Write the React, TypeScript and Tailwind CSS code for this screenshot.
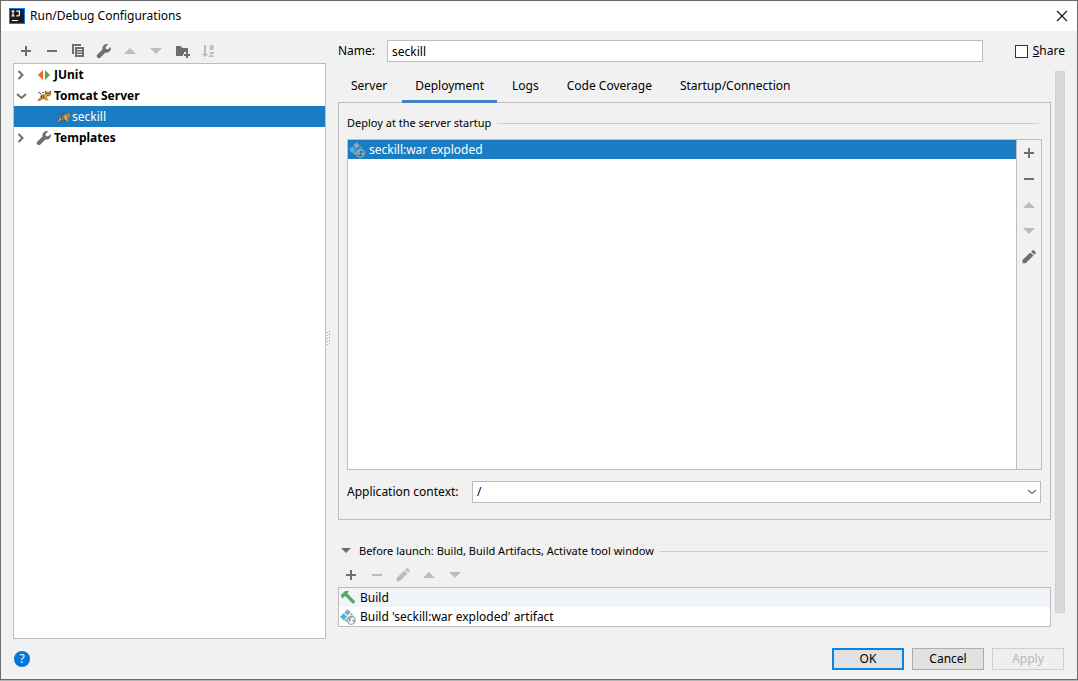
import { useState, type ReactNode } from "react";

const Icon = ({ children, size = 16 }: { children: ReactNode; size?: number }) => (
    <svg width={size} height={size} viewBox="0 0 16 16" className="shrink-0" aria-hidden="true">
        {children}
    </svg>
);

const PlusIcon = () => (
    <Icon>
        <path fill="currentColor" d="M7 3h2v4h4v2H9v4H7V9H3V7h4z" />
    </Icon>
);

const MinusIcon = () => (
    <Icon>
        <path fill="currentColor" d="M3 7h10v2H3z" />
    </Icon>
);

const CopyIcon = () => (
    <Icon>
        <path fill="currentColor" d="M2 1h9v2H4v8H2z" />
        <path fill="currentColor" fillRule="evenodd" d="M5 4h9v10H5zM7 6v1h5V6zM7 8.500v1h5v-1zM7 11v1h5v-1z" />
    </Icon>
);

const WrenchIcon = () => (
    <Icon>
        <path
            fill="currentColor"
            d="M14.600 3.900 12 6.500 9.900 6.100 9.500 4l2.600-2.600A4.300 4.300 0 0 0 6.500 6.500L1.400 11.600a2 2 0 0 0 3 3L9.500 9.500A4.300 4.300 0 0 0 14.600 3.900z"
        />
    </Icon>
);

const UpIcon = () => (
    <Icon>
        <path fill="currentColor" d="M2 11h12L8 5z" />
    </Icon>
);

const DownIcon = () => (
    <Icon>
        <path fill="currentColor" d="M2 5h12l-6 6z" />
    </Icon>
);

const FolderIcon = () => (
    <Icon>
        <path fill="currentColor" d="M2 3h4.500l2 2H14v4h-4v2H9v2H2z" />
        <path fill="currentColor" d="M12 9h2v2h2v2h-2v2h-2v-2h-2v-2h2z" />
    </Icon>
);

const SortIcon = () => (
    <Icon>
        <path fill="currentColor" d="M4 2h2v9h2.500L5 14 1.500 11H4z" />
        <g fill="none" stroke="currentColor" strokeWidth="1.300">
            <path d="M10 2.600h2.800v4.400M13 4.500h-2.700v1.900H13" />
            <path d="M9.600 9.600h3.400l-3 3.800h3.600" />
        </g>
    </Icon>
);

const PencilIcon = () => (
    <Icon>
        <path fill="currentColor" d="M1.500 11 9.300 3.400l3.200 3.200L4.700 14.300H1.500zM10.200 2.700l1.200-1.200a1.200 1.200 0 0 1 1.700 0l1.400 1.400a1.200 1.200 0 0 1 0 1.700l-1.200 1.200z" />
    </Icon>
);

const JUnitIcon = () => (
    <Icon>
        <path fill="#f26522" d="M7 3v10L2 8z" />
        <path fill="#59a83f" d="M9 3v10l5-5z" />
    </Icon>
);

const TomcatIcon = () => (
    <Icon>
        <path fill="none" stroke="#54543f" strokeWidth=".9" d="M2 4.500h1.500l2 2.500M6 4.500h2M1.500 12.500 4 10" />
        <path fill="#d3a645" d="M4.500 8 7.500 6.500l1.800-.5V3.200l1.800 1.100h1.500l1.800-1.300v4.300l-1.500 1.200-2 .6 1.800 3.200h-2L8.500 10.500l-2.800.5-2.300 2H1.800z" />
        <path fill="none" stroke="#4b4026" strokeWidth=".7" d="M9.400 5.800V3.200l1.700 1.100h1.500l1.800-1.300v4.200M4.500 8.200l3-1.600M3.200 12.800l2.600-1.900 2.800-.4 2 2.200" />
        <path fill="#2d2a1e" d="M10.500 5.300h1v.9h-1zM12.700 5.300h.9v.9h-.9zM11.400 7h1.300v.7h-1.300zM5.200 8.200h.9v1.800h-.9zM7.300 7.500h.9v2h-.9z" />
    </Icon>
);

const ArtifactIcon = () => (
    <Icon>
        <path fill="#9aa7b0" d="M7.500.2l3.300 3.300-3.300 3.300-3.300-3.300z" />
        <path fill="#40b6e0" d="M3.500 4.200 7 7.700l-3.500 3.500L0 7.700zM11.500 4.200l2.300 2.200q-2.300-.8-4.300.1z" />
        <path fill="#9aa7b0" d="M6.500 9v4.400l-2.300-2.300z" />
        <circle cx="11.300" cy="11.300" r="4" fill="none" stroke="#9aa7b0" strokeWidth="1.200" />
        <path fill="#9aa7b0" d="M8 9l3-1.500 1 1.200-1.500 1.300.5 1.500-1 2L8.500 12zM12.500 10.500l2.400.2-.7 2.800-1.700-.8z" />
    </Icon>
);

const HammerIcon = () => (
    <Icon>
        <path fill="#59a869" d="M.5 5.500 5 1h4L7.300 3.200l.7.800 7.300 7.600-2.200 2.400-7.400-7.600-.9-.2-2.300 2.300z" />
    </Icon>
);

const LogoIcon = () => (
    <Icon>
        <rect width="16" height="16" fill="#087cfa" />
        <rect x="1" y="1" width="14" height="14" fill="#1c1c1c" />
        <path fill="none" stroke="#fff" strokeWidth="1.200" d="M2.500 3.100h3M4 3v5M2.500 7.900h3M7.500 3.100h2.900v3.600q0 1.200-1.300 1.200H7.300" />
        <path fill="#fff" d="M3 12h6v1H3z" />
    </Icon>
);

type ToolButtonProps = { label: string; icon: ReactNode; disabled?: boolean };

const ToolButton = ({ label, icon, disabled }: ToolButtonProps) => (
    <button
        type="button"
        aria-label={label}
        disabled={disabled}
        className="flex h-[26px] w-[26px] items-center justify-center text-[#6e6e6e] disabled:text-[#bcbcbc]"
    >
        {icon}
    </button>
);

const treeTools: ToolButtonProps[] = [
    { label: "Add", icon: <PlusIcon /> },
    { label: "Remove", icon: <MinusIcon /> },
    { label: "Copy", icon: <CopyIcon /> },
    { label: "Edit defaults", icon: <WrenchIcon /> },
    { label: "Move up", icon: <UpIcon />, disabled: true },
    { label: "Move down", icon: <DownIcon />, disabled: true },
    { label: "Create folder", icon: <FolderIcon /> },
    { label: "Sort", icon: <SortIcon />, disabled: true },
];

const deployTools: ToolButtonProps[] = [
    { label: "Add", icon: <PlusIcon /> },
    { label: "Remove", icon: <MinusIcon /> },
    { label: "Move up", icon: <UpIcon />, disabled: true },
    { label: "Move down", icon: <DownIcon />, disabled: true },
    { label: "Edit", icon: <PencilIcon /> },
];

const launchTools: ToolButtonProps[] = [
    { label: "Add", icon: <PlusIcon /> },
    { label: "Remove", icon: <MinusIcon />, disabled: true },
    { label: "Edit", icon: <PencilIcon />, disabled: true },
    { label: "Move up", icon: <UpIcon />, disabled: true },
    { label: "Move down", icon: <DownIcon />, disabled: true },
];

const tabs = ["Server", "Deployment", "Logs", "Code Coverage", "Startup/Connection"];

const Chevron = ({ open }: { open: boolean }) => (
    <Icon>
        <path fill="none" stroke="#6e6e6e" strokeWidth="2" d={open ? "M3 6l4.500 4L12 6" : "M4.500 4l4 4-4 4"} />
    </Icon>
);

const TreeGroup = ({ name, icon, open = false }: { name: string; icon: ReactNode; open?: boolean }) => (
    <div role="treeitem" aria-expanded={open} className="flex h-[21px] items-center font-bold">
        <Chevron open={open} />
        <span className="ml-1.5 flex w-[18px]">{icon}</span>
        {name}
    </div>
);

const App = () => {
    const [tab, setTab] = useState("Deployment");
    const [name, setName] = useState("seckill");

    return (
        <div className="flex min-h-screen flex-col bg-[#b4b4b4] pb-px font-['Noto_Sans','Open_Sans',sans-serif] text-[12px] leading-[18px] text-black">
            <div className="flex grow flex-col border border-[#6b6b6b] bg-[#f1f1f1]">
                <header className="flex h-[30px] items-center bg-white pr-[7px] pl-2">
                    <LogoIcon />
                    <h1 className="ml-[5px] grow">Run/Debug Configurations</h1>
                    <button type="button" aria-label="Close">
                        <Icon>
                            <path stroke="#111" strokeWidth="1.100" d="M3 3l10 10M13 3L3 13" />
                        </Icon>
                    </button>
                </header>

                <div className="flex grow">
                    <aside className="flex w-[325px] shrink-0 flex-col pt-[7px] pl-3">
                        <div className="-mb-px flex">
                            {treeTools.map((tool) => (
                                <ToolButton key={tool.label} {...tool} />
                            ))}
                        </div>
                        <div role="tree" aria-label="Configurations" className="grow border border-[#bdbdbd] bg-white">
                            <TreeGroup name="JUnit" icon={<JUnitIcon />} />
                            <TreeGroup name="Tomcat Server" icon={<TomcatIcon />} open />
                            <div role="treeitem" aria-selected="true" className="flex h-[21px] items-center bg-[#1a7dc4] pl-[42px] text-white">
                                <TomcatIcon />
                                seckill
                            </div>
                            <TreeGroup name="Templates" icon={<span className="text-[#6e6e6e]"><WrenchIcon /></span>} />
                        </div>
                    </aside>

                    <div role="separator" className="flex w-3 shrink-0 items-center pt-2">
                        <svg width="6" height="16" viewBox="0 0 6 16" fill="#a8a8a8" aria-hidden="true">
                            {[0, 3, 6, 9, 12].map((y) => (
                                <path key={y} d={`M1 ${y + 1}h1v1H1zM3 ${y}h1v1H3z`} />
                            ))}
                        </svg>
                    </div>

                    <main className="flex min-w-0 grow flex-col pt-[9px] pr-3">
                        <div className="flex h-[22px] items-center">
                            <label htmlFor="name" className="w-[49px]">Name:</label>
                            <input
                                id="name"
                                value={name}
                                onChange={(e) => setName(e.target.value)}
                                className="h-[22px] min-w-0 grow border border-[#bdbdbd] bg-white px-1 outline-none"
                            />
                            <label className="ml-8 flex items-center gap-[5px]">
                                <input type="checkbox" className="h-[13px] w-[13px] appearance-none border border-[#333] bg-white" />
                                <span><span className="underline">S</span>hare</span>
                            </label>
                        </div>

                        <div className="mt-[9px] flex grow gap-1">
                            <div className="flex min-w-0 grow flex-col">
                                <div role="tablist" className="flex gap-0.5">
                                    {tabs.map((item) => (
                                        <button
                                            key={item}
                                            type="button"
                                            role="tab"
                                            aria-selected={tab === item}
                                            onClick={() => setTab(item)}
                                            className="z-10 -mb-px h-8 border-b-3 border-transparent px-[13px] aria-selected:border-[#4083c9]"
                                        >
                                            {item}
                                        </button>
                                    ))}
                                </div>

                                <section className="flex grow flex-col border border-[#bdbdbd] px-2 pt-[11px] pb-4">
                                    <div className="flex items-center gap-1.5 pr-[3px]">
                                        <h2 className="text-[11px] leading-[18px]">Deploy at the server startup</h2>
                                        <span className="h-px grow bg-[#cdcdcd]" />
                                    </div>
                                    <div className="mt-[7px] flex grow border border-[#bdbdbd]">
                                        <div role="listbox" aria-label="Deploy at the server startup" className="grow bg-white">
                                            <div role="option" aria-selected="true" className="flex h-[19px] items-center gap-1 bg-[#1a7dc4] pl-px text-white">
                                                <ArtifactIcon />
                                                seckill:war exploded
                                            </div>
                                        </div>
                                        <div className="flex w-[25px] flex-col items-center border-l border-[#bdbdbd]">
                                            {deployTools.map((tool) => (
                                                <ToolButton key={tool.label} {...tool} />
                                            ))}
                                        </div>
                                    </div>
                                    <div className="mt-[11px] flex items-center pr-px">
                                        <label htmlFor="context" className="w-[125px]">Application context:</label>
                                        <div className="relative grow">
                                            <select id="context" className="block h-[22px] w-full appearance-none border border-[#bdbdbd] bg-white px-1 outline-none">
                                                <option>/</option>
                                            </select>
                                            <svg className="pointer-events-none absolute top-[7px] right-1" width="10" height="8" viewBox="0 0 10 8" aria-hidden="true">
                                                <path fill="none" stroke="#6e6e6e" strokeWidth="1.200" d="M1 2l4 3.500L9 2" />
                                            </svg>
                                        </div>
                                    </div>
                                </section>

                                <div className="mt-[22px] flex items-center pr-[3px]">
                                    <span className="text-[#6e6e6e]">
                                        <Icon>
                                            <path fill="currentColor" d="M3 5h10l-5 5z" />
                                        </Icon>
                                    </span>
                                    <h2 className="mx-[5px] text-[11px] leading-[18px]">Before launch: Build, Build Artifacts, Activate tool window</h2>
                                    <span className="h-px grow bg-[#cdcdcd]" />
                                </div>
                                <div className="mt-0.5 flex">
                                    {launchTools.map((tool) => (
                                        <ToolButton key={tool.label} {...tool} />
                                    ))}
                                </div>
                                <ul className="-mt-px mb-3 border border-[#bdbdbd] bg-white">
                                    <li className="flex h-[19px] items-center gap-1 bg-[#f1f5fa] pl-px">
                                        <HammerIcon />
                                        Build
                                    </li>
                                    <li className="flex h-[19px] items-center gap-1 pl-px">
                                        <ArtifactIcon />
                                        Build 'seckill:war exploded' artifact
                                    </li>
                                </ul>
                            </div>
                            <div className="mb-[26px] w-2.5 shrink-0 border border-[#d0d0d0] bg-[#d8d8d8]" />
                        </div>
                    </main>
                </div>

                <footer className="flex h-10 items-center gap-2 px-[13px]">
                    <button type="button" aria-label="Help" className="mr-auto flex h-4 w-4 items-center justify-center rounded-full bg-[#0078d7] text-white">
                        ?
                    </button>
                    <button type="button" className="h-[22px] w-[72px] border-2 border-[#0a84e0] bg-[#e1e1e1] leading-none">OK</button>
                    <button type="button" className="h-[22px] w-[72px] border border-[#adadad] bg-[#e1e1e1] leading-none">Cancel</button>
                    <button type="button" disabled className="h-[22px] w-[72px] border border-[#cfcfcf] bg-[#efefef] leading-none text-[#b8b8b8]">Apply</button>
                </footer>
            </div>
        </div>
    );
};

export default App;
